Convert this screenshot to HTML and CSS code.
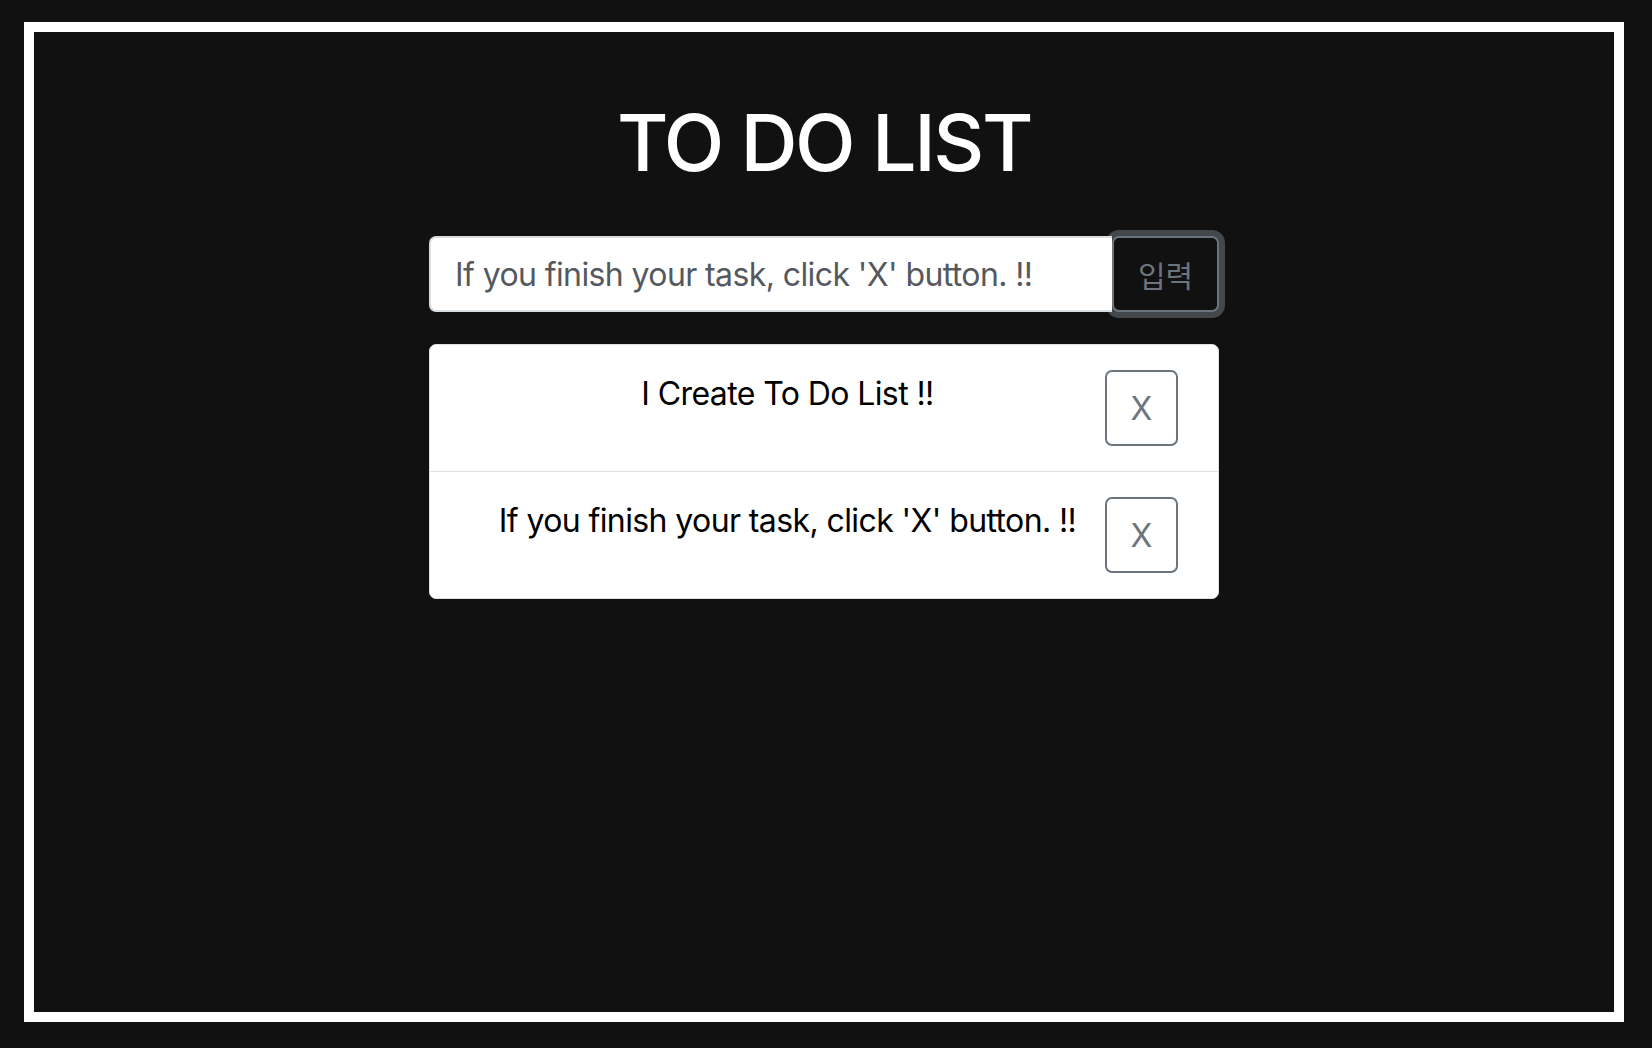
FILE: index.html
```html
<!DOCTYPE html>
<html lang="ko">
<head>
<meta charset="utf-8">
<title>TO DO LIST</title>
<link rel="stylesheet" href="styles.css">
</head>
<body>
<div class="frame">
  <h1 class="title">TO DO LIST</h1>
  <div class="todo">
    <form class="input-group">
      <input class="task-input" type="text" placeholder="If you finish your task, click 'X' button. !!">
      <button class="add-btn" type="button">입력</button>
    </form>
    <ul class="list">
      <li class="item">
        <span class="item-text">I Create To Do List !!</span>
        <button class="del-btn" type="button">X</button>
      </li>
      <li class="item">
        <span class="item-text">If you finish your task, click 'X' button. !!</span>
        <button class="del-btn" type="button">X</button>
      </li>
    </ul>
  </div>
</div>
</body>
</html>
```
FILE: styles.css
```css
html, body {
  margin: 0;
  padding: 0;
  background: #111111;
}

body {
  font-family: Inter, "Noto Sans CJK KR", sans-serif;
}

.frame {
  box-sizing: border-box;
  width: 1600px;
  height: 1000px;
  margin: 22px 0 0 24px;
  border: 10px solid #ffffff;
  padding-top: 62px;
  display: flex;
  flex-direction: column;
  align-items: center;
}

.title {
  margin: 0;
  color: #ffffff;
  font-family: Inter, sans-serif;
  font-weight: 500;
  font-size: 79px;
  line-height: 96px;
  letter-spacing: -2.4px;
}

.todo {
  width: 790px;
  margin-top: 46px;
  display: flex;
  flex-direction: column;
  gap: 32px;
}

.input-group {
  display: flex;
  margin: 0;
  height: 76px;
}

.task-input {
  flex: 1;
  min-width: 0;
  position: relative;
  z-index: 1;
  box-sizing: border-box;
  height: 76px;
  margin: 0;
  padding: 0 24px;
  border: 2px solid #d8dde2;
  border-right: none;
  border-radius: 7px 0 0 7px;
  background: #ffffff;
  font-family: Inter, sans-serif;
  font-size: 32px;
  letter-spacing: -0.6px;
  color: #212529;
  outline: none;
}

.task-input::placeholder {
  color: #55595e;
  opacity: 1;
}

.add-btn {
  box-sizing: border-box;
  width: 107px;
  height: 76px;
  margin: 0;
  padding: 0;
  border: 2px solid #6c757d;
  border-radius: 7px;
  background: #111111;
  color: #6c757d;
  font-family: "Noto Sans CJK KR", sans-serif;
  font-size: 30px;
  box-shadow: 0 0 0 6px #43484d;
}

.list {
  list-style: none;
  margin: 0;
  padding: 0;
  background: #ffffff;
  border: 1px solid #dee2e6;
  border-radius: 7px;
}

.item {
  display: flex;
  align-items: flex-start;
  padding: 25px 40px;
  border-bottom: 1px solid #dee2e6;
}

.item:last-child {
  border-bottom: none;
}

.item-text {
  flex: 1;
  text-align: center;
  font-family: Inter, sans-serif;
  font-size: 32px;
  line-height: 48px;
  letter-spacing: -0.6px;
  color: #000000;
}

.del-btn {
  box-sizing: border-box;
  width: 73px;
  height: 76px;
  margin: 0;
  padding: 0;
  border: 2px solid #6c757d;
  border-radius: 7px;
  background: #ffffff;
  color: #6c757d;
  font-family: Inter, sans-serif;
  font-size: 32px;
  font-weight: 400;
}
```
